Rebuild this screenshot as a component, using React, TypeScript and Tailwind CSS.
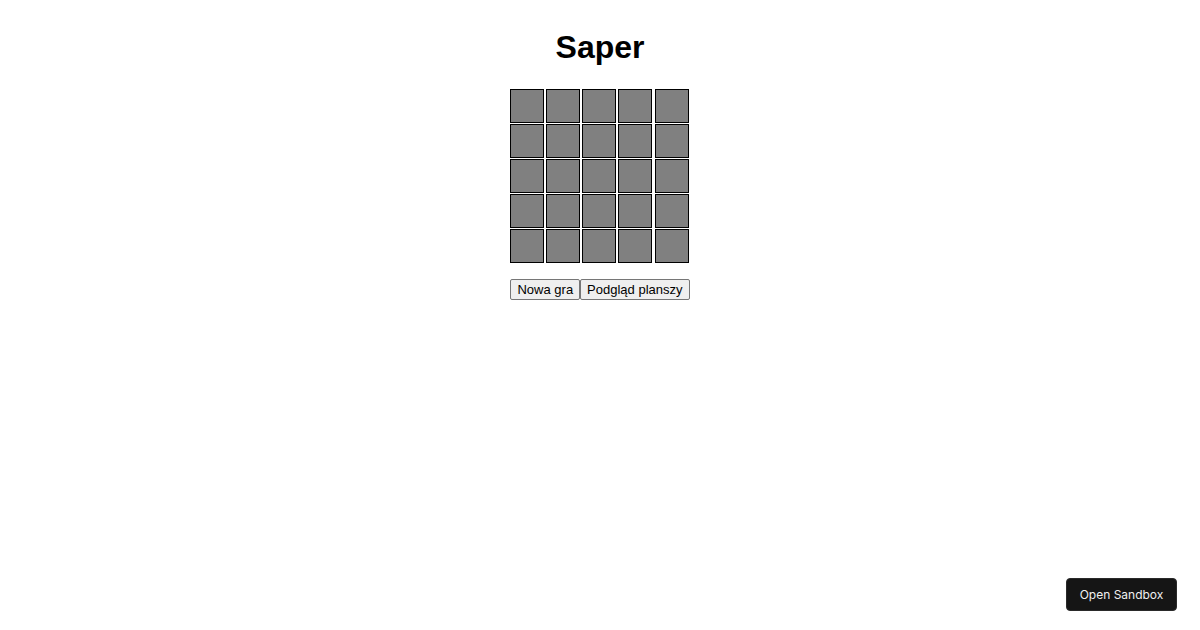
import React from "react";

export default function App() {
  const cells = Array.from({ length: 25 });
  return (
    <div className="min-h-[630px] bg-white relative" style={{ fontFamily: '"Liberation Sans", Arial, sans-serif' }}>
      <div className="flex flex-col items-center pt-[29px]">
        <h1 className="text-[32px] font-bold leading-[37px] text-black m-0">Saper</h1>
        <div className="mt-[23px] mr-[2px] grid grid-cols-[repeat(5,34px)] gap-x-[2.25px] gap-y-[1px]">
          {cells.map((_, i) => (
            <div key={i} className="w-[34px] h-[34px] bg-[#808080] border border-black" />
          ))}
        </div>
        <div className="mt-[16px] flex">
          <button className="h-[21px] px-[6px] text-[13px] leading-[15px] text-black bg-[#efefef] border border-[#767676] rounded-[2px]">
            Nowa gra
          </button>
          <button className="h-[21px] px-[6px] text-[13px] leading-[15px] text-black bg-[#efefef] border border-[#767676] rounded-[2px]">
            Podgląd planszy
          </button>
        </div>
      </div>
      <button
        className="absolute right-[23px] top-[578px] w-[111px] h-[33px] bg-[#151515] text-[#f0f0f0] text-[12px] rounded-[4px] border border-[#2a2a2a]"
        style={{ fontFamily: 'Inter, "Liberation Sans", sans-serif' }}
      >
        Open Sandbox
      </button>
    </div>
  );
}
